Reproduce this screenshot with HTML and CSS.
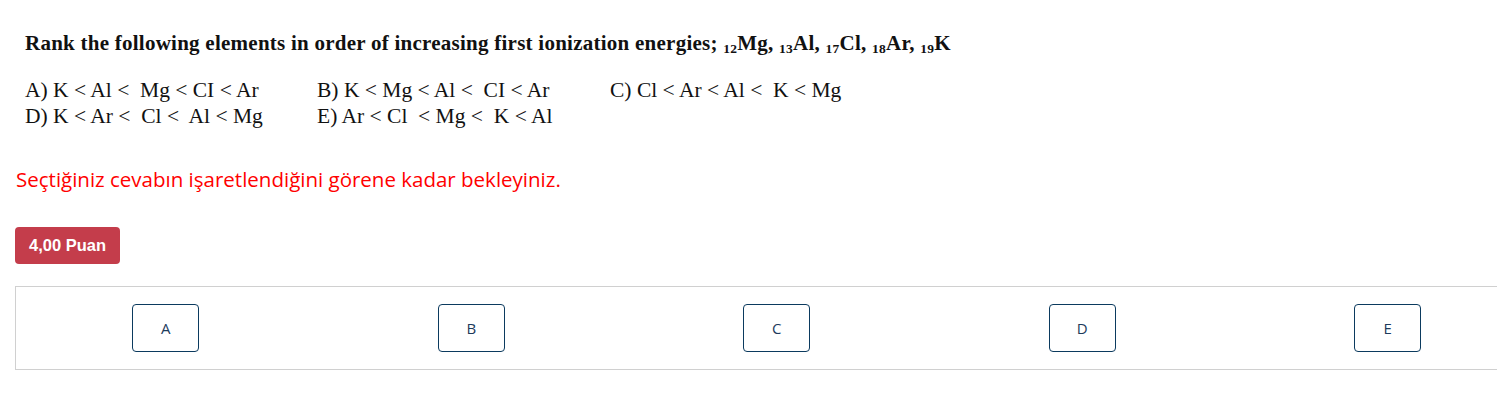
FILE: index.html
```html
<!DOCTYPE html>
<html>
<head>
<meta charset="utf-8">
<link rel="stylesheet" href="styles.css">
</head>
<body>
<div class="page">
  <div class="question">
    <p class="title">Rank the following elements in order of increasing first ionization energies; <sub>12</sub>Mg, <sub>13</sub>Al, <sub>17</sub>Cl, <sub>18</sub>Ar, <sub>19</sub>K</p>
    <div class="options">
      <span>A) K &lt; Al &lt;&nbsp; Mg &lt; CI &lt; Ar</span>
      <span>B) K &lt; Mg &lt; Al &lt;&nbsp; CI &lt; Ar</span>
      <span>C) Cl &lt; Ar &lt; Al &lt;&nbsp; K &lt; Mg</span>
      <span>D) K &lt; Ar &lt;&nbsp; Cl &lt;&nbsp; Al &lt; Mg</span>
      <span>E) Ar &lt; Cl &nbsp;&lt; Mg &lt;&nbsp; K &lt; Al</span>
      <span></span>
    </div>
  </div>
  <p class="warning">Seçtiğiniz cevabın işaretlendiğini görene kadar bekleyiniz.</p>
  <div class="badge">4,00 Puan</div>
  <div class="answers">
    <div class="grid">
      <div class="cell"><button class="choice">A</button></div>
      <div class="cell"><button class="choice">B</button></div>
      <div class="cell"><button class="choice">C</button></div>
      <div class="cell"><button class="choice">D</button></div>
      <div class="cell"><button class="choice">E</button></div>
    </div>
  </div>
</div>
</body>
</html>
```

FILE: styles.css
```css
html, body {
  margin: 0;
  padding: 0;
  background: #fff;
  overflow: hidden;
}
.page {
  padding: 0 0 0 15px;
  width: 1540px;
}
.question {
  padding: 30px 0 0 10px;
  font-family: "Liberation Serif", "Times New Roman", serif;
  color: #111;
}
.title {
  margin: 0;
  font-weight: bold;
  font-size: 21px;
  line-height: 26px;
  letter-spacing: 0.25px;
}
.title sub {
  font-size: 13.5px;
  vertical-align: -3px;
  line-height: 0;
}
.options {
  margin-top: 21px;
  display: grid;
  grid-template-columns: 292px 293px auto;
  font-size: 21.5px;
  line-height: 26px;
}
.warning {
  margin: 37px 0 0 1px;
  font-family: "Open Sans", sans-serif;
  font-size: 20.5px;
  line-height: 26px;
  color: #ff0000;
}
.badge {
  margin-top: 35px;
  display: inline-flex;
  align-items: center;
  justify-content: center;
  width: 105px;
  height: 37px;
  border-radius: 4px;
  background: #c43d4b;
  color: #fff;
  font-family: "Liberation Sans", Arial, sans-serif;
  font-weight: bold;
  font-size: 16.5px;
}
.answers {
  margin-top: 22px;
  border: 1px solid #d0d0d0;
  border-right: none;
  height: 82px;
  display: flex;
  align-items: center;
}
.grid {
  margin-left: -3px;
  display: grid;
  grid-template-columns: repeat(5, 305.5px);
}
.cell {
  display: flex;
  justify-content: center;
}
.choice {
  width: 67px;
  height: 48px;
  border: 1px solid #0b3a5e;
  border-radius: 4px;
  background: #fff;
  color: #1d3b5c;
  font-family: "Open Sans", sans-serif;
  font-size: 15px;
  padding: 0;
}
```
